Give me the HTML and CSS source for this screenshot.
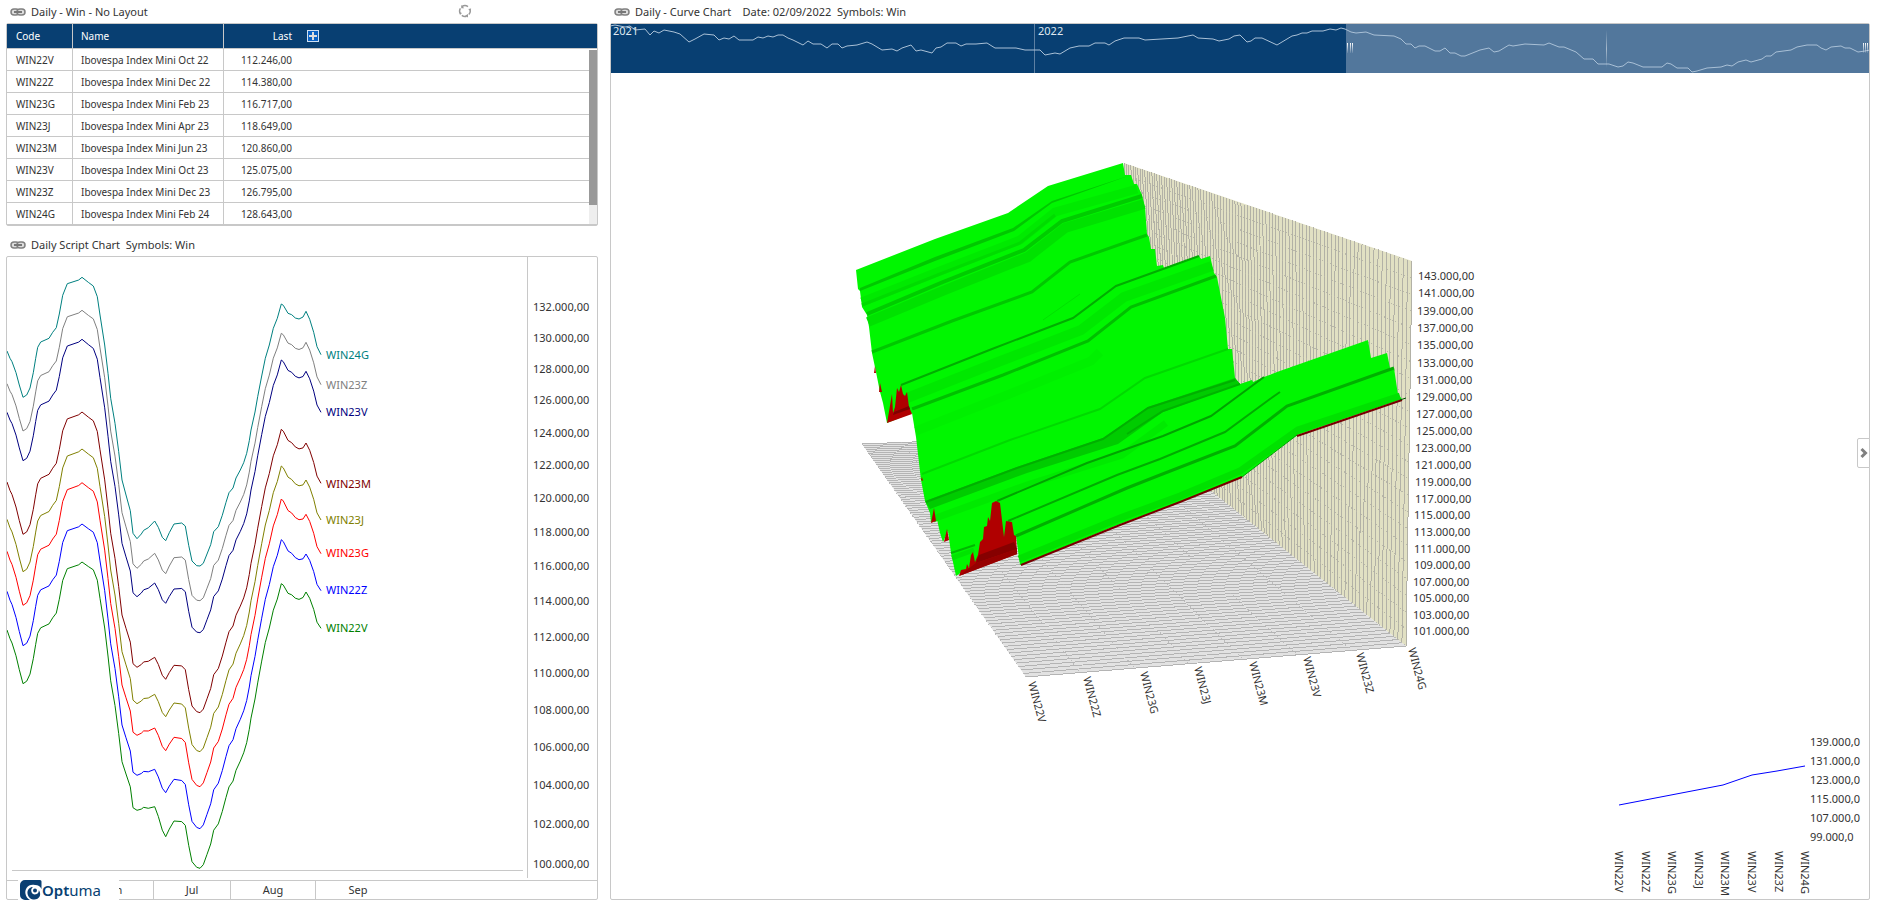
FILE: index.html
```html
<!DOCTYPE html>
<html lang="en">
<head>
  <meta charset="UTF-8">
  <title>Optuma - Win</title>
  <meta name="viewport" content="width=device-width, initial-scale=1.0">
  <link rel="stylesheet" href="styles.css">
</head>
<body>
  <svg class="defs" width="0" height="0" aria-hidden="true">
    <symbol id="link" viewBox="0 0 16 8">
      <rect x="1" y="1" width="8" height="6" rx="3" fill="#ddd" stroke="#808080" stroke-width="1.500"/>
      <rect x="7" y="1" width="8" height="6" rx="3" fill="#ddd" stroke="#808080" stroke-width="1.500"/>
      <path d="M4 4h8" stroke="#777" stroke-width="2"/>
    </symbol>
  </svg>

  <main class="workspace">
    <div class="left">
      <section>
        <header class="title">
          <svg class="link-icon"><use href="#link"/></svg>
          <h2>Daily - Win - No Layout</h2>
          <button class="refresh" aria-label="Refresh">
            <svg width="14" height="14" viewBox="0 0 14 14" fill="none" stroke="#999" stroke-width="1.500">
              <path d="M4 2.500a5.300 5.300 0 0 1 6 .1M11.800 5a5.300 5.300 0 0 1-1 5.600M8.600 12.200a5.300 5.300 0 0 1-4.800-.8M2.100 9.300a5.300 5.300 0 0 1 .3-5"/>
              <path d="M3.200 1v3.200h3zM13.200 4.400l-3 .6 2 2zM10 10l-3 1.800 3 1.600zM1 8l1 3 2-2z" fill="#999" stroke="none"/>
            </svg>
          </button>
        </header>
        <div class="card quotes">
          <table>
            <colgroup><col class="c-code"><col class="c-name"><col class="c-last"><col></colgroup>
            <thead>
              <tr><th>Code</th><th>Name</th><th class="num">Last</th>
                <th><button class="add" aria-label="Add column">
                  <svg width="8" height="8" viewBox="0 0 8 8"><path d="M4 0v8M0 4h8" stroke="#ddd" stroke-width="2"/></svg>
                </button></th></tr>
            </thead>
            <tbody>
              <tr><td>WIN22V</td><td>Ibovespa Index Mini Oct 22</td><td class="num">112.246,00</td><td></td></tr>
              <tr><td>WIN22Z</td><td>Ibovespa Index Mini Dec 22</td><td class="num">114.380,00</td><td></td></tr>
              <tr><td>WIN23G</td><td>Ibovespa Index Mini Feb 23</td><td class="num">116.717,00</td><td></td></tr>
              <tr><td>WIN23J</td><td>Ibovespa Index Mini Apr 23</td><td class="num">118.649,00</td><td></td></tr>
              <tr><td>WIN23M</td><td>Ibovespa Index Mini Jun 23</td><td class="num">120.860,00</td><td></td></tr>
              <tr><td>WIN23V</td><td>Ibovespa Index Mini Oct 23</td><td class="num">125.075,00</td><td></td></tr>
              <tr><td>WIN23Z</td><td>Ibovespa Index Mini Dec 23</td><td class="num">126.795,00</td><td></td></tr>
              <tr><td>WIN24G</td><td>Ibovespa Index Mini Feb 24</td><td class="num">128.643,00</td><td></td></tr>
            </tbody>
          </table>
          <div class="scrollbar"><div class="thumb"></div></div>
        </div>
      </section>

      <section class="grow">
        <header class="title">
          <svg class="link-icon"><use href="#link"/></svg>
          <h2>Daily Script Chart&nbsp; Symbols: Win</h2>
        </header>
        <div class="card grow">
          <svg class="chart" id="scriptChart" viewBox="7 257 590 642">
            <g class="frame">
              <path d="M527.5 257V878M12 870.5H523M7 880.5H597M153.5 881V899M230.5 881V899M315.5 881V899"/>
            </g>
            <g class="months">
              <text x="114" y="894" text-anchor="middle">Jun</text>
              <text x="192" y="894" text-anchor="middle">Jul</text>
              <text x="273" y="894" text-anchor="middle">Aug</text>
              <text x="358" y="894" text-anchor="middle">Sep</text>
            </g>
            <g id="scriptAxis"></g>
            <g id="scriptLines"></g>
          </svg>
          <div class="logo">
            <svg width="22" height="20" viewBox="0 0 22 20">
              <path d="M5 0H20a1.500 1.500 0 0 1 1.500 1.500V9A7 7 0 0 0 15 5C8 3.500 4.500 9 5.500 14 6 17 8 19 10 20H5a5 5 0 0 1-5-5V5a5 5 0 0 1 5-5z" fill="#093f72"/>
              <path d="M7.500 13.500c-.5-3.500 2-6.500 5.500-6.500-2 1.500-2 3.500-1.500 5 .5 2 2.500 2.800 4.500 2.300 2-.5 3-2 2.800-4.300C21 13 20.500 17 17.500 18.800 13.500 21 8 18.500 7.500 13.500z" fill="#093f72"/>
              <circle cx="15" cy="10.500" r="2" fill="#093f72"/>
            </svg>
            <span><b>Opt</b>uma</span>
          </div>
        </div>
      </section>
    </div>

    <section class="right">
      <header class="title">
        <svg class="link-icon"><use href="#link"/></svg>
        <h2>Daily - Curve Chart &nbsp;&nbsp; Date: 02/09/2022&nbsp; Symbols: Win</h2>
      </header>
      <div class="card grow">
        <svg class="navigator" viewBox="611 24 1258 49">
          <defs>
            <linearGradient id="fade" x1="0" y1="0" x2="0" y2="1">
              <stop offset="0" stop-color="#fff" stop-opacity="0"/>
              <stop offset=".5" stop-color="#fff" stop-opacity=".5"/>
              <stop offset="1" stop-color="#fff" stop-opacity="0"/>
            </linearGradient>
            <linearGradient id="grip" x1="0" y1="0" x2="0" y2="1">
              <stop offset="0" stop-color="#fff"/>
              <stop offset="1" stop-color="#fff" stop-opacity=".1"/>
            </linearGradient>
          </defs>
          <rect x="611" y="24" width="1258" height="49" fill="#083f72"/>
          <rect x="1346" y="24" width="523" height="49" fill="#52779c"/>
          <path d="M1034.5 24V73" stroke="#5d80a3"/>
          <polyline id="navLine"/>
          <rect x="1606" y="30" width="1" height="38" fill="url(#fade)"/>
          <g fill="url(#grip)">
            <rect x="1347" y="43" width="1" height="10"/><rect x="1350" y="43" width="1" height="10"/><rect x="1352" y="43" width="1" height="10"/>
            <rect x="1863" y="43" width="1" height="10"/><rect x="1865" y="43" width="1" height="10"/><rect x="1867" y="43" width="1" height="10"/>
          </g>
          <text x="613" y="35">2021</text>
          <text x="1038" y="35">2022</text>
        </svg>

        <svg class="chart" viewBox="611 73 1258 826">
          <polygon points="862,444 1138,433 1406,646 1026,677" fill="#e2e2e2"/>
          <polygon points="1124,163 1412,261 1406,646 1138,433" fill="#e1e0c3"/>
          <g id="grid3d"></g>

          <!-- surface -->
          <polygon fill="#00f600" points="856,270 935,239 1008,213 1048,186 1123,163 1125,175 1131,175 1134,184 1137,184 1142,195 1145,207 1147,234 1149,237 1151,249 1155,249 1157,266 1163,265 1164,268 1199,256 1201,259 1210,256 1214,273 1217,277 1225,318 1228,349 1232,349 1235,378 1240,384 1252,380 1253,382 1264,377 1277,372 1368,340 1371,358 1387,353 1390,368 1394,368 1398,395 1402,399 1297,435 1242,477 1180,502 1120,524 1020,565 1016,536 956,576 951,553 948,531 943,542 940,533 936,515 931,523 930,513 925,501 921,480 916,437 912,413 887,423 883,403 880,392 876,372 872,353 869,327 867,315 862,307 860,291 858,289"/>
          <polygon fill="#00c800" points="860,288 935,257 1013,228 1052,201 1131,175 1052,203 1014,231 935,261 860,291"/>
          <g class="ridges">
            <polyline points="862,302 940,271 1020,240 1055,212 1137,189" stroke="#00ea00" stroke-width="9"/>
            <polyline points="862,305 940,274 1020,243 1055,215" stroke="#00dc00" stroke-width="3"/>
            <polyline points="868,322 945,290 1028,257 1065,228 1144,204" stroke="#00e200" stroke-width="10"/>
            <polyline points="867,314 943,282 1024,250 1062,221 1142,196" stroke="#00cc00" stroke-width="4"/>
            <polyline points="872,352 952,321 1032,292 1070,262 1147,235" stroke="#00c800" stroke-width="3"/>
            <polyline points="907,398 998,362 1081,330 1124,297 1212,266" stroke="#00e800" stroke-width="10"/>
            <polyline points="901,385 992,349 1073,318 1116,286 1199,256" stroke="#00ae00" stroke-width="2"/>
            <polyline points="912,409 1003,375 1088,341 1131,307 1216,276" stroke="#00c000" stroke-width="3"/>
            <polyline points="916,431 1007,395 1091,361 1100,352" stroke="#00f000" stroke-width="9"/>
            <polyline points="922,474 1010,440 1100,409 1145,378 1228,349" stroke="#00da00" stroke-width="2"/>
            <polyline points="933,519 1030,484 1122,455 1166,423" stroke="#00ea00" stroke-width="7"/>
            <polyline points="1043,320 1080,294" stroke="#00e200" stroke-width="1"/>
          </g>
          <polygon fill="#00cc00" points="925,501 1017,467 1103,438 1148,407 1235,378 1240,384 1163,412 1118,444 1027,473 930,509"/>
          <g class="ridges">
            <polyline points="926,502 1017,468 1103,439 1148,408 1235,380" stroke="#00b000" stroke-width="2"/>
            <polyline points="1127,434 1163,411 1240,384" stroke="#00b400" stroke-width="2"/>
            <polyline points="997,501 1087,463 1163,436 1211,416 1264,377" stroke="#00a400" stroke-width="2"/>
            <polyline points="1008,521 1117,475 1160,459 1225,432 1270,399 1280,392" stroke="#00ac00" stroke-width="2"/>
            <polyline points="1016,536 1127,488 1160,475 1235,446 1287,406 1394,368" stroke="#00b000" stroke-width="3"/>
            <polyline points="951,553 975,545" stroke="#00b800" stroke-width="2"/>
            <polyline points="952,558 974,550" stroke="#00e400" stroke-width="5"/>
            <polyline points="1019,559 1120,518 1180,496 1240,471 1298,430 1400,396" stroke="#00e200" stroke-width="7"/>
            <polyline points="1021,565 1120,525 1180,502 1242,477" stroke="#760000" stroke-width="2"/>
            <polyline points="1242,477 1297,435" stroke="#00a000" stroke-width="1"/>
            <polyline points="1297,436 1402,400" stroke="#760000" stroke-width="2"/>
            <polyline points="1400,400 1406,398" stroke="#005000" stroke-width="1"/>
          </g>

          <!-- downside -->
          <g fill="#b00000">
            <polygon points="959,576 1017,554 1016,536 1014,535 1012,522 1006,521 1004,537 1000,503 996,501 992,503 990,521 988,517 987,526 984,527 983,539 980,542 978,555 975,562 973,552 971,555 969,568 967,564 966,569 961,570"/>
            <polygon points="887,423 892,394 893,413 895,407 897,388 899,392 901,385 903,394 905,396 907,392 909,407 912,414"/>
            <polygon points="874,373 875,366 876,373"/>
            <polygon points="879,392 880,383 882,392"/>
            <polygon points="931,523 934,508 936,521"/>
            <polygon points="944,542 947,529 949,540"/>
            <polygon points="921,480 922,477 923,481"/>
          </g>
          <polygon fill="#860000" points="979,555 1014,542 1017,549 976,563"/>
          <polygon fill="#960000" points="959,576 976,563 1017,549 1017,554"/>
          <polygon fill="#800000" points="894,412 909,406 910,409 893,415"/>

          <g id="curveAxis"></g>

          <!-- term structure inset -->
          <polyline class="inset" points="1619,805 1723,785 1752,775 1777,771 1805,766"/>
          <g id="insetAxis"></g>
        </svg>
        <button class="expand" aria-label="Expand panel">
          <svg width="8" height="12" viewBox="0 0 8 12"><path d="M1.500 2l4 4-4 4" fill="none" stroke="#808080" stroke-width="3"/></svg>
        </button>
      </div>
    </section>
  </main>

  <script src="script.js"></script>
</body>
</html>
```
FILE: styles.css
```css
:root {
  --navy: #083f72;
  --line: #c8c8c8;
  --text: #333;
}

* {
  box-sizing: border-box;
}

body {
  margin: 0;
  background: #fff;
  color: var(--text);
  font-family: "Noto Sans", "Open Sans", sans-serif;
  font-size: 11px;
}

.defs {
  position: absolute;
}

.workspace {
  display: grid;
  grid-template-columns: 592fr 1260fr;
  gap: 12px;
  height: 100vh;
  padding: 0 8px 7px 6px;
}

.left, .right, .grow {
  display: flex;
  flex-direction: column;
  min-width: 0;
  min-height: 0;
}

.left {
  gap: 7px;
}

.grow {
  flex: 1;
}

.title {
  display: flex;
  align-items: center;
  height: 23px;
  padding-left: 4px;
}

.title h2 {
  margin: 0 0 0 5px;
  font-size: 11px;
  font-weight: normal;
  line-height: 23px;
  white-space: nowrap;
}

.link-icon {
  width: 16px;
  height: 8px;
}

button {
  display: flex;
  align-items: center;
  justify-content: center;
  padding: 0;
  border: none;
  background: none;
  cursor: pointer;
}

.refresh {
  margin: 0 126px 2px auto;
}

.card {
  position: relative;
  border: 1px solid var(--line);
  border-radius: 2px;
}

/* quotes table */
table {
  width: 100%;
  table-layout: fixed;
  border-collapse: separate;
  border-spacing: 0;
  font-size: 10px;
}

.c-code { width: 66px; }
.c-name { width: 151px; }
.c-last { width: 76px; }

th, td {
  height: 22px;
  padding: 0 8px;
  border-bottom: 1px solid var(--line);
  text-align: left;
  font-weight: normal;
  line-height: 14px;
  white-space: nowrap;
}

th {
  height: 25px;
  background: var(--navy);
  color: #fff;
}

th:first-child, td:first-child,
th:nth-child(2), td:nth-child(2) {
  border-right: 1px solid var(--line);
}

th:first-child, td:first-child {
  padding-left: 9px;
}

th:last-child {
  padding-left: 7px;
}

.num {
  text-align: right;
}

.add {
  width: 12px;
  height: 12px;
  border: 1px solid #cfe0f2;
  background: #0a62c4;
}

.scrollbar {
  position: absolute;
  top: 26px;
  right: 0;
  bottom: 1px;
  width: 8px;
  background: #eee;
}

.thumb {
  height: 89%;
  background: #999;
}

/* charts */
.chart {
  display: block;
  flex: 1;
  width: 100%;
  min-height: 0;
}

.chart text {
  font-size: 11px;
  fill: var(--text);
}

.frame path {
  fill: none;
  stroke: var(--line);
}

#scriptLines polyline {
  fill: none;
  stroke-width: 1;
}

.logo {
  position: absolute;
  left: 11px;
  bottom: -1px;
  display: flex;
  align-items: center;
  width: 101px;
  height: 20px;
  padding-left: 2px;
  background: #fff;
  color: var(--navy);
  font-size: 15px;
  line-height: 20px;
}

.logo b {
  font-weight: 600;
}

.navigator {
  display: block;
  width: 100%;
}

.navigator text {
  font-size: 11px;
  fill: #dfe8f0;
}

#navLine {
  fill: none;
  stroke: #a9c0d6;
  stroke-width: 1;
}

.ridges polyline, .inset {
  fill: none;
}

.inset {
  stroke: #00f;
}

.expand {
  position: absolute;
  top: 414px;
  right: -1px;
  width: 13px;
  height: 30px;
  border: 1px solid var(--line);
  border-radius: 2px 0 0 2px;
  background: #fff;
}
```
FILE: script.js
```js
const NS = "http://www.w3.org/2000/svg";

function add(parent, tag, attrs, text) {
  const el = document.createElementNS(NS, tag);
  for (const key in attrs) el.setAttribute(key, attrs[key]);
  if (text) el.textContent = text;
  document.getElementById(parent).appendChild(el);
  return el;
}

const codes = ["WIN22V", "WIN22Z", "WIN23G", "WIN23J", "WIN23M", "WIN23V", "WIN23Z", "WIN24G"];

// SCRIPT CHART
// front curve, thirds of a pixel from the top left of the plot
const base = [[21,303],[30,325],[36,335],[48,368],[58,405],[69,442],[80,435],[90,414],[100,368],[107,325],[113,292],
  [122,276],[147,265],[158,247],[169,233],[178,192],[188,136],[202,101],[236,90],[246,82],[265,97],[280,108],[292,140],
  [300,195],[314,285],[324,370],[332,445],[345,520],[356,605],[366,690],[378,735],[391,782],[399,850],[411,866],
  [424,852],[431,841],[445,833],[464,813],[475,832],[487,862],[497,872],[508,848],[522,822],[545,819],[556,828],
  [566,886],[576,933],[590,947],[600,948],[610,940],[621,912],[632,884],[641,845],[655,830],[667,796],[678,757],
  [687,728],[699,714],[708,684],[721,660],[731,638],[740,610],[748,572],[753,540],[765,486],[773,440],[785,378],
  [796,325],[808,285],[820,235],[832,205],[844,162],[850,166],[864,190],[875,194],[886,204],[897,207],[909,201],
  [918,184],[929,208],[941,247],[951,290],[963,314]];

// spread of each contract below the front curve, at these x positions
const keys = [21, 69, 246, 366, 411, 464, 497, 522, 600, 844, 918, 963];
const series = [
  { code: "WIN24G", color: "#008080", label: 355, spread: [0, 0, 0, 0, 0, 0, 0, 0, 0, 0, 0, 0] },
  { code: "WIN23Z", color: "#808080", label: 385, spread: [98, 101, 99, 98, 89, 97, 99, 101, 104, 88, 93, 90] },
  { code: "WIN23V", color: "#000080", label: 412, spread: [184, 190, 186, 190, 174, 186, 188, 195, 200, 168, 180, 173] },
  { code: "WIN23M", color: "#800000", label: 484, spread: [393, 411, 404, 405, 386, 409, 416, 424, 440, 376, 395, 386] },
  { code: "WIN23J", color: "#808000", label: 520, spread: [505, 523, 515, 515, 495, 520, 528, 537, 557, 486, 506, 496] },
  { code: "WIN23G", color: "#ff0000", label: 553, spread: [601, 624, 616, 615, 590, 621, 630, 640, 662, 585, 609, 597] },
  { code: "WIN22Z", color: "#0000ff", label: 590, spread: [721, 745, 740, 735, 710, 745, 756, 766, 788, 707, 728, 708] },
  { code: "WIN22V", color: "#008000", label: 628, spread: [837, 859, 854, 845, 815, 857, 888, 891, 907, 839, 842, 821] }
];

function spreadAt(x, spread) {
  let i = 1;
  while (i < keys.length - 1 && x > keys[i]) i++;
  const t = (x - keys[i - 1]) / (keys[i] - keys[i - 1]);
  return spread[i - 1] + t * (spread[i] - spread[i - 1]);
}

series.forEach(s => {
  const points = base.map(([x, y]) => `${(x / 3).toFixed(1)},${((y + spreadAt(x, s.spread)) / 3 + 250).toFixed(1)}`);
  add("scriptLines", "polyline", { points: points.join(" "), stroke: s.color });
  add("scriptLines", "text", { x: 326, y: s.label + 4, style: `fill:${s.color}` }, s.code);
});

const prices = [307, 338, 369, 400, 433, 465, 498, 532, 566, 601, 637, 673, 710, 747, 785, 824, 864];
prices.forEach((y, i) => add("scriptAxis", "text", { x: 533, y: y + 4 }, `${132 - i * 2}.000,00`));

// NAVIGATOR
document.getElementById("navLine").setAttribute("points", `610,26 615,25 625,27 630,26 635,30 645,29 650,35 654,31
  659,33 664,30 674,32 680,34 689,42 695,39 704,34 714,35 719,40 724,38 729,39 734,36 739,40 753,40 758,37 763,38
  768,36 773,37 778,35 783,35 788,38 793,40 803,45 808,41 813,44 821,44 827,48 832,44 838,44 842,48 847,46 857,45
  867,42 872,44 882,50 892,49 897,51 902,48 911,45 916,51 921,50 932,53 936,48 941,47 947,43 956,43 961,46 966,44
  976,44 987,43 995,48 1016,48 1025,50 1040,50 1045,55 1055,53 1060,54 1070,48 1079,46 1089,46 1095,43 1105,43
  1109,45 1115,41 1124,38 1139,38 1145,40 1178,38 1193,35 1198,38 1213,39 1219,41 1229,39 1234,36 1240,35 1247,42
  1251,41 1255,38 1262,38 1277,45 1292,36 1297,35 1302,33 1307,33 1312,31 1323,31 1330,29 1336,30 1341,28 1345,29
  1351,32 1356,33 1366,32 1374,35 1394,36 1401,39 1406,44 1411,44 1415,48 1419,46 1425,46 1435,51 1440,51 1445,48
  1450,53 1455,53 1461,56 1465,56 1480,50 1489,48 1494,52 1499,51 1509,45 1513,46 1525,44 1544,45 1549,43 1559,47
  1564,47 1576,52 1584,59 1593,59 1598,64 1609,64 1618,67 1623,66 1628,62 1633,63 1643,67 1662,67 1667,63 1671,64
  1677,68 1688,68 1692,72 1697,71 1707,68 1721,67 1727,65 1732,66 1738,62 1746,60 1751,62 1762,59 1766,56 1771,56
  1776,52 1791,50 1797,47 1807,45 1817,45 1821,48 1826,50 1831,47 1841,46 1845,48 1850,48 1858,52 1865,51 1870,50`);

// CURVE CHART: floor and back wall
const mix = (a, b, t) => [a[0] + (b[0] - a[0]) * t, a[1] + (b[1] - a[1]) * t];
const depth = u => u / (u + 1.4 * (1 - u));

function gridLine(a, b, stroke, dash) {
  const attrs = { x1: a[0], y1: a[1], x2: b[0], y2: b[1], stroke: stroke, "shape-rendering": "crispEdges" };
  if (dash) attrs["stroke-dasharray"] = dash;
  add("grid3d", "line", attrs);
}

const floor = { backLeft: [862, 444], backRight: [1138, 433], frontLeft: [1026, 677], frontRight: [1406, 646] };
const wall = { backTop: [1124, 163], frontTop: [1412, 261] };

const days = 92;
for (let i = 0; i <= days; i++) {
  const t = depth(i / days);
  const right = mix(floor.backRight, floor.frontRight, t);
  gridLine(mix(floor.backLeft, floor.frontLeft, t), right, "#b4b4b4");
  gridLine(mix(wall.backTop, wall.frontTop, t), right, "#b2b1a6");
}
for (let i = 0; i < 8; i++) {
  gridLine(mix(floor.backLeft, floor.backRight, i / 7), mix(floor.frontLeft, floor.frontRight, i / 7), "#bbb", "1 3");
}
for (let i = 1; i < 23; i++) {
  gridLine(mix(wall.backTop, floor.backRight, i / 23), mix(wall.frontTop, floor.frontRight, i / 23), "#b8b7a8", "1 2");
}

const levels = [276, 293, 311, 328, 345, 363, 380, 397, 414, 431, 448, 465, 482, 499, 515, 532, 549, 565, 582, 598, 615, 631];
levels.forEach((y, i) => add("curveAxis", "text", { x: 1418 - Math.round(i / 4), y: y + 4 }, `${143 - i * 2}.000,00`));

const ticks = [[1028, 683], [1083, 678], [1140, 673], [1194, 668], [1249, 663], [1303, 658], [1356, 654], [1408, 649]];
ticks.forEach(([x, y], i) => add("curveAxis", "text", { transform: `translate(${x} ${y}) rotate(75)` }, codes[i]));

// inset
["139", "131", "123", "115", "107", "99"].forEach((v, i) =>
  add("insetAxis", "text", { x: 1810, y: 746 + i * 19 }, `${v}.000,0`));
codes.forEach((code, i) =>
  add("insetAxis", "text", { transform: `translate(${Math.round(1615 + i * 26.6)} 851) rotate(90)` }, code));
```
